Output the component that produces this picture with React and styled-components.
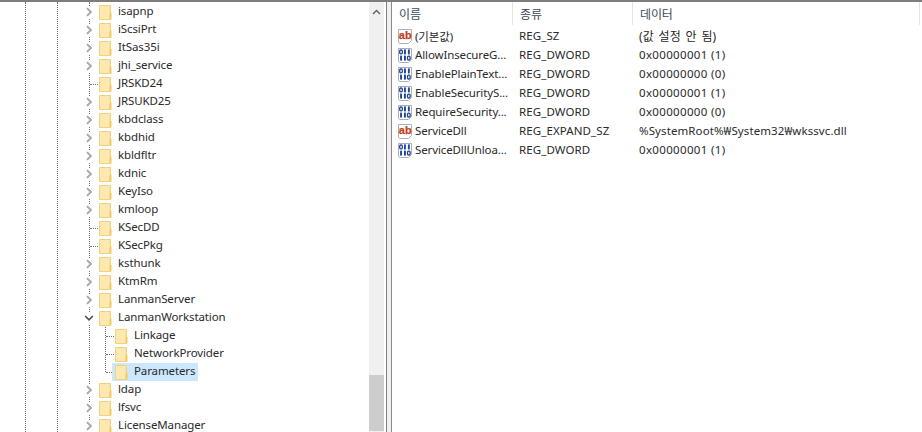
import React from "react";
import styled, { createGlobalStyle } from "styled-components";

const Global = createGlobalStyle`
  html, body { margin: 0; padding: 0; background: #fff; overflow: hidden; }
  #root { width: 922px; height: 432px; }
`;

const FONT = `"Noto Sans", "Noto Sans CJK KR", sans-serif`;

const Window = styled.div`
  width: 922px; height: 432px; display: flex; flex-direction: column; overflow: hidden;
  font-family: ${FONT}; font-size: 11.5px; letter-spacing: -0.12px; color: #2a2a2a;
  border-top: 2px solid #7d7d7d; box-sizing: border-box; background: #fff;
`;
const Panes = styled.div`display: flex; flex: 1; min-height: 0;`;
const TreePane = styled.div`position: relative; width: 369px; overflow: hidden; padding-top: 1px; box-sizing: border-box;`;
const Row = styled.div`
  height: 18px; display: flex; align-items: center; padding-left: ${p => p.$indent}px; white-space: nowrap;
`;
const Twist = styled.span`
  position: relative; width: 11px; height: 13px; margin-right: 5px; display: flex; align-items: center; justify-content: center; flex: none; background: #fff;
`;
const Item = styled.span`
  position: relative; display: flex; align-items: center; height: 18px; padding: 0 3px 0 3px; margin-left: -3px;
  background: ${p => p.$sel ? "#cce8ff" : "transparent"};
`;
const FolderWrap = styled.span`width: 13px; height: 15px; margin-top: 1px; flex: none; display: block;`;
const Label = styled.span`margin-left: 6px; line-height: 18px; padding-bottom: 2px;`;
const Guide = styled.i`
  position: absolute; left: ${p => p.$x}px; top: ${p => p.$y}px; height: ${p => p.$h}px; width: 0;
  border-left: 1px dotted #707070;
`;
const Tick = styled.i`
  position: absolute; left: ${p => p.$x}px; top: ${p => p.$y}px; width: ${p => p.$w}px; height: 0;
  border-top: 1px dotted #707070;
`;
const Scrollbar = styled.div`
  width: 15px; background: #f0f0f0; display: flex; flex-direction: column; align-items: center; flex: none;
`;
const ScrollUp = styled.div`height: 18px; width: 100%; display: flex; align-items: center; justify-content: center; padding-top: 1px; box-sizing: border-box;`;
const ScrollTrack = styled.div`flex: 1; width: 100%; display: flex; flex-direction: column; justify-content: flex-end; padding-bottom: 1px;`;
const ScrollThumb = styled.div`height: 56px; background: #cdcdcd;`;
const Splitter = styled.div`
  width: 6px; margin-left: 2px; flex: none; background: #f0f0f0;
  border-left: 1px solid #7f7f7f; border-right: 1px solid #8a8a8a; box-sizing: border-box;
`;
const ListPane = styled.div`flex: 1; display: flex; flex-direction: column; min-width: 0;`;
const Header = styled.div`display: flex; height: 23px;`;
const HeadCell = styled.div`
  width: ${p => p.$w}px; padding-left: 7px; box-sizing: border-box; flex: none;
  border-right: 1px solid #e5e5e5; line-height: 26px; font-size: 12px; color: #3c4a5e; height: 23px;
`;
const Rows = styled.div`padding-top: 2px;`;
const ListRow = styled.div`display: flex; height: 19px; align-items: center; padding-left: 5px; line-height: 19px; white-space: nowrap;`;
const Name = styled.div`width: 122px; flex: none; display: flex; align-items: center; gap: 2px;`;
const NameText = styled.span`padding-bottom: ${p => p.$cjk ? 0 : 2}px;`;
const Type = styled.div`width: 120px; flex: none; letter-spacing: 0.1px; padding-bottom: 2px;`;
const Data = styled.div`
  flex: 1; padding-bottom: ${p => p.$cjk ? 0 : 2}px;
  letter-spacing: ${p => p.$hex ? "0.34px" : "0.1px"};
  font-size: ${p => p.$cjk ? "12px" : "11.5px"};
  word-spacing: ${p => p.$cjk ? "1.5px" : "0"};
`;

const Chevron = ({ open }) => (
  <svg width="10" height="10" viewBox="0 0 10 10">
    {open
      ? <path d="M1.2 3L5 6.8L8.8 3" fill="none" stroke="#4d4d4d" strokeWidth="1.6" />
      : <path d="M3 1.1L6.9 5L3 8.9" fill="none" stroke="#a8a8a8" strokeWidth="1.9" />}
  </svg>
);

const Folder = () => (
  <FolderWrap>
    <svg width="13" height="15" viewBox="0 0 13 15" style={{ display: "block" }}>
      <path d="M0.5 0.5H11.5V14.5H0.5Z" fill="#fce08f" stroke="#f0d27e" />
      <path d="M1 1H10.5V14H1Z" fill="#fde9b0" />
      <path d="M10.5 8.5L12.5 7.5V14.5H10.5Z" fill="#f4c95f" />
    </svg>
  </FolderWrap>
);

const AbIcon = () => (
  <svg width="16" height="17" viewBox="0 0 16 17" style={{ flex: "none" }}>
    <path d="M1.5 1.5H14.5V12.5L11.5 15.5H2.5L1.5 14Z" fill="#fff" stroke="#a9afbc" />
    <text x="1.8" y="11.4" fontFamily="Liberation Sans" fontWeight="700" fontSize="11" letterSpacing="0" fill="#c4431c" stroke="#c4431c" strokeWidth="0.25">ab</text>
  </svg>
);

const Bits = ({ y, pattern }) => pattern.split("").map((c, i) => {
  const x = 2.4 + i * 3.9;
  return c === "1"
    ? <rect key={i} x={x + 0.7} y={y} width="1.9" height="5" fill="#1f4597" />
    : <rect key={i} x={x + 0.3} y={y + 0.6} width="2.6" height="3.8" rx="1.1" fill="none" stroke="#1f4597" strokeWidth="1.3" />;
});

const BinIcon = () => (
  <svg width="16" height="17" viewBox="0 0 16 17" style={{ flex: "none" }}>
    <path d="M1.5 1.5H14.5V12.5L11.5 15.5H2.5L1.5 14Z" fill="#fff" stroke="#a9afbc" />
    <Bits y={2.4} pattern="011" />
    <Bits y={8.6} pattern="110" />
  </svg>
);

const tree = [
  ["isapnp", 1], ["iScsiPrt", 1], ["ItSas35i", 1], ["jhi_service", 1], ["JRSKD24", 0], ["JRSUKD25", 1],
  ["kbdclass", 1], ["kbdhid", 1], ["kbldfltr", 1], ["kdnic", 1], ["KeyIso", 1], ["kmloop", 1],
  ["KSecDD", 0], ["KSecPkg", 0], ["ksthunk", 1], ["KtmRm", 1], ["LanmanServer", 1], ["LanmanWorkstation", 2],
  ["Linkage", 3], ["NetworkProvider", 3], ["Parameters", 4], ["ldap", 1], ["lfsvc", 1], ["LicenseManager", 1],
];

const values = [
  ["ab", "(기본값)", "REG_SZ", "(값 설정 안 됨)", "cjk"],
  ["bin", "AllowInsecureG...", "REG_DWORD", "0x00000001 (1)", "hex"],
  ["bin", "EnablePlainText...", "REG_DWORD", "0x00000000 (0)", "hex"],
  ["bin", "EnableSecurityS...", "REG_DWORD", "0x00000001 (1)", "hex"],
  ["bin", "RequireSecurity...", "REG_DWORD", "0x00000000 (0)", "hex"],
  ["ab", "ServiceDll", "REG_EXPAND_SZ", "%SystemRoot%₩System32₩wkssvc.dll", ""],
  ["bin", "ServiceDllUnloa...", "REG_DWORD", "0x00000001 (1)", "hex"],
];

export default function App() {
  return (
    <Window>
      <Global />
      <Panes>
        <TreePane>
          <Guide $x={25} $y={0} $h={430} />
          <Guide $x={57} $y={0} $h={430} />
          <Guide $x={89} $y={0} $h={430} />
          <Tick $x={90} $y={82} $w={8} />
          <Tick $x={90} $y={226} $w={8} />
          <Tick $x={90} $y={244} $w={8} />
          <Guide $x={105} $y={325} $h={45} />
          <Tick $x={106} $y={334} $w={8} />
          <Tick $x={106} $y={352} $w={8} />
          <Tick $x={106} $y={370} $w={8} />
          {tree.map(([name, kind]) => {
            const child = kind >= 3;
            return (
              <Row key={name} $indent={child ? 115 : kind === 0 ? 99 : 83}>
                {!child && kind !== 0 && <Twist><Chevron open={kind === 2} /></Twist>}
                <Item $sel={kind === 4}>
                  <Folder />
                  <Label>{name}</Label>
                </Item>
              </Row>
            );
          })}
        </TreePane>
        <Scrollbar>
          <ScrollUp>
            <svg width="9" height="6" viewBox="0 0 9 6"><path d="M1 5L4.5 1.5L8 5" fill="none" stroke="#606060" strokeWidth="1.4" /></svg>
          </ScrollUp>
          <ScrollTrack><ScrollThumb /></ScrollTrack>
        </Scrollbar>
        <Splitter />
        <ListPane>
          <Header>
            <HeadCell $w={121}>이름</HeadCell>
            <HeadCell $w={120}>종류</HeadCell>
            <HeadCell $w={287}>데이터</HeadCell>
          </Header>
          <Rows>
            {values.map(([icon, name, type, data, kind]) => (
              <ListRow key={name}>
                <Name>{icon === "ab" ? <AbIcon /> : <BinIcon />}<NameText $cjk={name.startsWith("(")}>{name}</NameText></Name>
                <Type>{type}</Type>
                <Data $hex={kind === "hex"} $cjk={kind === "cjk"}>{data}</Data>
              </ListRow>
            ))}
          </Rows>
        </ListPane>
      </Panes>
    </Window>
  );
}
